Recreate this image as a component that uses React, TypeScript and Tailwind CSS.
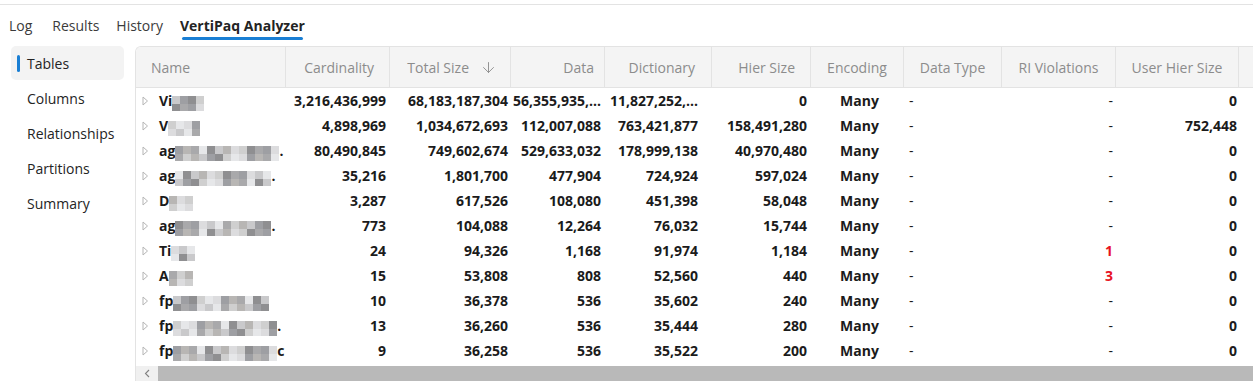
import { ArrowDown } from "lucide-react";

const grays = [
  "bg-[#c9c9cb]",
  "bg-[#a9a9ab]",
  "bg-[#dcdcde]",
  "bg-[#8f8f91]",
  "bg-[#b8b6b4]",
  "bg-[#e6e7e9]",
  "bg-[#9e9fa3]",
  "bg-[#cfcfcf]",
];

function Blur({ width, seed }: { width: number; seed: number }) {
  const n = Math.max(1, Math.round(width / 8));
  return (
    <span className="inline-flex flex-col translate-y-[3px]">
      {[0, 1].map((r) => (
        <span key={r} className="flex">
          {Array.from({ length: n }).map((_, i) => (
            <span
              key={i}
              className={"block w-[8px] h-[8px] " + grays[(i * 5 + r * 3 + seed * 7 + ((i * i) % 3)) % grays.length]}
            />
          ))}
        </span>
      ))}
    </span>
  );
}

const rows = [
  { pre: "Vi", blur: 32, post: "", card: "3,216,436,999", total: "68,183,187,304", data: "56,355,935,...", dict: "11,827,252,...", hier: "0", ri: "-", user: "0" },
  { pre: "V", blur: 35, post: "", card: "4,898,969", total: "1,034,672,693", data: "112,007,088", dict: "763,421,877", hier: "158,491,280", ri: "-", user: "752,448" },
  { pre: "ag", blur: 100, post: ".", card: "80,490,845", total: "749,602,674", data: "529,633,032", dict: "178,999,138", hier: "40,970,480", ri: "-", user: "0" },
  { pre: "ag", blur: 96, post: ".", card: "35,216", total: "1,801,700", data: "477,904", dict: "724,924", hier: "597,024", ri: "-", user: "0" },
  { pre: "D", blur: 24, post: "", card: "3,287", total: "617,526", data: "108,080", dict: "451,398", hier: "58,048", ri: "-", user: "0" },
  { pre: "ag", blur: 96, post: ".", card: "773", total: "104,088", data: "12,264", dict: "76,032", hier: "15,744", ri: "-", user: "0" },
  { pre: "Ti", blur: 22, post: "", card: "24", total: "94,326", data: "1,168", dict: "91,974", hier: "1,184", ri: "1", user: "0" },
  { pre: "A", blur: 22, post: "", card: "15", total: "53,808", data: "808", dict: "52,560", hier: "440", ri: "3", user: "0" },
  { pre: "fp", blur: 94, post: "", card: "10", total: "36,378", data: "536", dict: "35,602", hier: "240", ri: "-", user: "0" },
  { pre: "fp", blur: 100, post: ".", card: "13", total: "36,260", data: "536", dict: "35,444", hier: "280", ri: "-", user: "0" },
  { pre: "fp", blur: 100, post: "c", card: "9", total: "36,258", data: "536", dict: "35,522", hier: "200", ri: "-", user: "0" },
];

const cols = "grid grid-cols-[150px_104px_121px_94px_107px_99px_93px_98px_114px_123px_1fr]";

function Expander() {
  return (
    <svg width="7" height="10" viewBox="0 0 7 10" className="shrink-0">
      <path d="M1 1 L5.5 5 L1 9 Z" fill="none" stroke="#b5b5b5" strokeWidth="1" strokeLinejoin="round" />
    </svg>
  );
}

export default function App() {
  const nav = ["Columns", "Relationships", "Partitions", "Summary"];

  return (
    <div className="w-[1253px] h-[381px] overflow-hidden bg-white text-[14px] text-[#1b1b1b] font-['Open_Sans',sans-serif]">
      <div className="h-[5px] border-b border-[#e3e3e3]" />

      <div className="flex items-start pl-[9px] h-[41px] pt-[11px] leading-[20px] text-[#3b3b3b]">
        <div>Log</div>
        <div className="ml-[20px]">Results</div>
        <div className="ml-[17px]">History</div>
        <div className="ml-[17px] flex flex-col items-center font-bold text-[#242424]">
          <span>VertiPaq Analyzer</span>
          <span className="mt-[1px] h-[3px] w-[121px] rounded-full bg-[#1a7fd4]" />
        </div>
      </div>

      <div className="flex">
        <div className="w-[135px] shrink-0 px-[11px] text-[#242424]">
          <div className="flex items-center h-[34px] rounded-[5px] bg-[#f3f3f3]">
            <span className="ml-[6px] mr-[7px] w-[3px] h-[17px] rounded-full bg-[#1a7fd4]" />
            <span>Tables</span>
          </div>
          <div className="mt-[1px]">
            {nav.map((n) => (
              <div key={n} className="flex items-center h-[35px] pl-[16px]">
                {n}
              </div>
            ))}
          </div>
        </div>

        <div className="flex-1 min-w-0 border-l border-t border-[#e3e3e3] rounded-tl-[6px] overflow-hidden">
          <div className={cols + " h-[41px] bg-[#f4f4f4] border-b border-[#e3e3e3] text-[#8c8c8c]"}>
            <div className="flex items-center pl-[15px] border-r border-[#e3e3e3]">Name</div>
            <div className="flex items-center justify-end pr-[15px] border-r border-[#e3e3e3]">Cardinality</div>
            <div className="flex items-center justify-end pr-[13px] gap-[11px] border-r border-[#e3e3e3]">
              <span>Total Size</span>
              <ArrowDown size={17} strokeWidth={1.3} />
            </div>
            <div className="flex items-center justify-end pr-[10px] border-r border-[#e3e3e3]">Data</div>
            <div className="flex items-center justify-end pr-[16px] border-r border-[#e3e3e3]">Dictionary</div>
            <div className="flex items-center justify-end pr-[15px] border-r border-[#e3e3e3]">Hier Size</div>
            <div className="flex items-center justify-center border-r border-[#e3e3e3]">Encoding</div>
            <div className="flex items-center justify-center border-r border-[#e3e3e3]">Data Type</div>
            <div className="flex items-center justify-center border-r border-[#e3e3e3]">RI Violations</div>
            <div className="flex items-center justify-center border-r border-[#e3e3e3]">User Hier Size</div>
            <div />
          </div>

          {rows.map((r, i) => (
            <div key={i} className={cols + " h-[25px] items-center font-bold whitespace-nowrap"}>
              <div className="flex items-center pl-[6px] overflow-hidden">
                <Expander />
                <span className="ml-[10px]">{r.pre}</span>
                <Blur width={r.blur} seed={i} />
                <span>{r.post}</span>
              </div>
              <div className="text-right pr-[4px]">{r.card}</div>
              <div className="text-right pr-[3px]">{r.total}</div>
              <div className="text-right pr-[4px]">{r.data}</div>
              <div className="text-right pr-[14px]">{r.dict}</div>
              <div className="text-right pr-[4px]">{r.hier}</div>
              <div className="text-center pl-[4px]">Many</div>
              <div className="pl-[5px] font-normal">-</div>
              <div className={r.ri === "-" ? "text-right pr-[3px] font-normal" : "text-right pr-[3px] text-[#e81123]"}>{r.ri}</div>
              <div className="text-right pr-[2px]">{r.user}</div>
              <div />
            </div>
          ))}

          <div className="mt-[3px] flex h-[15px] items-center">
            <div className="w-[22px] h-full flex items-center justify-center bg-[#f0f0f0]">
              <svg width="6" height="9" viewBox="0 0 6 9">
                <path d="M5 1 L1.5 4.5 L5 8" fill="none" stroke="#808080" strokeWidth="1.1" />
              </svg>
            </div>
            <div className="flex-1 h-full bg-[#b9b9b9]" />
          </div>
        </div>
      </div>
    </div>
  );
}
